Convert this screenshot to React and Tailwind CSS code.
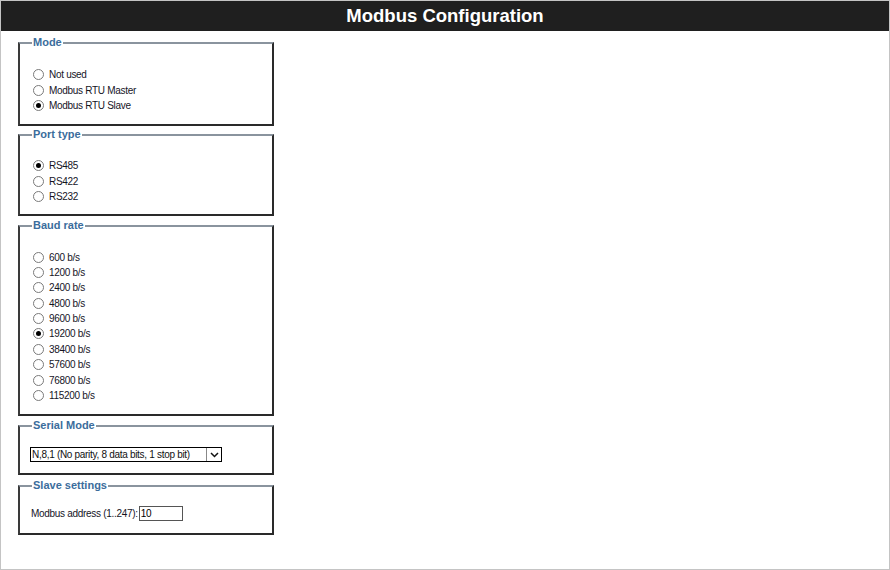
import { useState } from 'react';

const font = { fontFamily: '"Liberation Sans", Arial, sans-serif' };

const modes = ['Not used', 'Modbus RTU Master', 'Modbus RTU Slave'];
const ports = ['RS485', 'RS422', 'RS232'];
const bauds = ['600 b/s', '1200 b/s', '2400 b/s', '4800 b/s', '9600 b/s', '19200 b/s', '38400 b/s', '57600 b/s', '76800 b/s', '115200 b/s'];

function Group({ title, children, className = '' }) {
  return (
    <fieldset className={`w-[256px] border-2 border-t-[#8a949e] border-l-[#3a3a3a] border-r-[#2a2a2a] border-b-[#2a2a2a] px-[12px] ${className}`}>
      <legend className="px-[1px] text-[11px] font-bold leading-[13px] text-[#3b6d9c]">{title}</legend>
      {children}
    </fieldset>
  );
}

function RadioList({ items, value, onChange, className }) {
  return (
    <div className={`flex flex-col ${className}`}>
      {items.map((item) => (
        <label key={item} className="flex h-[15.4px] cursor-pointer items-center gap-[5px] text-[10px] tracking-[-0.3px] text-[#15151f]" onClick={() => onChange(item)}>
          <span className="ml-[1px] flex h-[11px] w-[11px] items-center justify-center rounded-full border border-[#7a7a7a] bg-white">
            {value === item && <span className="h-[5px] w-[5px] rounded-full bg-black" />}
          </span>
          {item}
        </label>
      ))}
    </div>
  );
}

export default function App() {
  const [mode, setMode] = useState('Modbus RTU Slave');
  const [port, setPort] = useState('RS485');
  const [baud, setBaud] = useState('19200 b/s');
  const [address, setAddress] = useState('10');

  return (
    <div style={font} className="flex h-[570px] w-[890px] flex-col border border-[#c4c4c4] bg-white">
      <div className="flex h-[30px] shrink-0 items-center justify-center bg-[#1f1f1f] text-[18.5px] font-bold text-white">
        Modbus Configuration
      </div>
      <div className="ml-[17px] mt-[5px] flex flex-col gap-[2px]">
        <Group title="Mode">
          <RadioList items={modes} value={mode} onChange={setMode} className="pt-[18px] pb-[11px]" />
        </Group>
        <Group title="Port type">
          <RadioList items={ports} value={port} onChange={setPort} className="pt-[17px] pb-[10px]" />
        </Group>
        <Group title="Baud rate" className="mt-[1px]">
          <RadioList items={bauds} value={baud} onChange={setBaud} className="pt-[17px] pb-[11px]" />
        </Group>
        <Group title="Serial Mode" className="mt-[1px]">
          <div className="pt-[15px] pb-[11px]">
            <div className="-ml-[2px] flex h-[15px] w-[192px] items-center border border-black bg-white text-[10px] tracking-[-0.3px] text-[#111]">
              <span className="flex-1 whitespace-nowrap pl-[1px]">N,8,1 (No parity, 8 data bits, 1 stop bit)</span>
              <span className="flex h-full w-[15px] items-center justify-center border-l border-[#888]">
                <svg width="9" height="6" viewBox="0 0 9 6"><path d="M1 1l3.5 3.5L8 1" fill="none" stroke="#111" strokeWidth="1.5" /></svg>
              </span>
            </div>
          </div>
        </Group>
        <Group title="Slave settings" className="mt-[2px]">
          <div className="flex items-center gap-[1px] pt-[14px] pb-[12px] text-[10px] tracking-[-0.3px] text-[#15151f]">
            <span className="-ml-[1px] whitespace-nowrap">Modbus address (1..247):</span>
            <input
              value={address}
              onChange={(e) => setAddress(e.target.value)}
              className="h-[15px] w-[44px] border border-[#555] px-[1px] text-[10px] text-black outline-none"
            />
          </div>
        </Group>
      </div>
    </div>
  );
}
